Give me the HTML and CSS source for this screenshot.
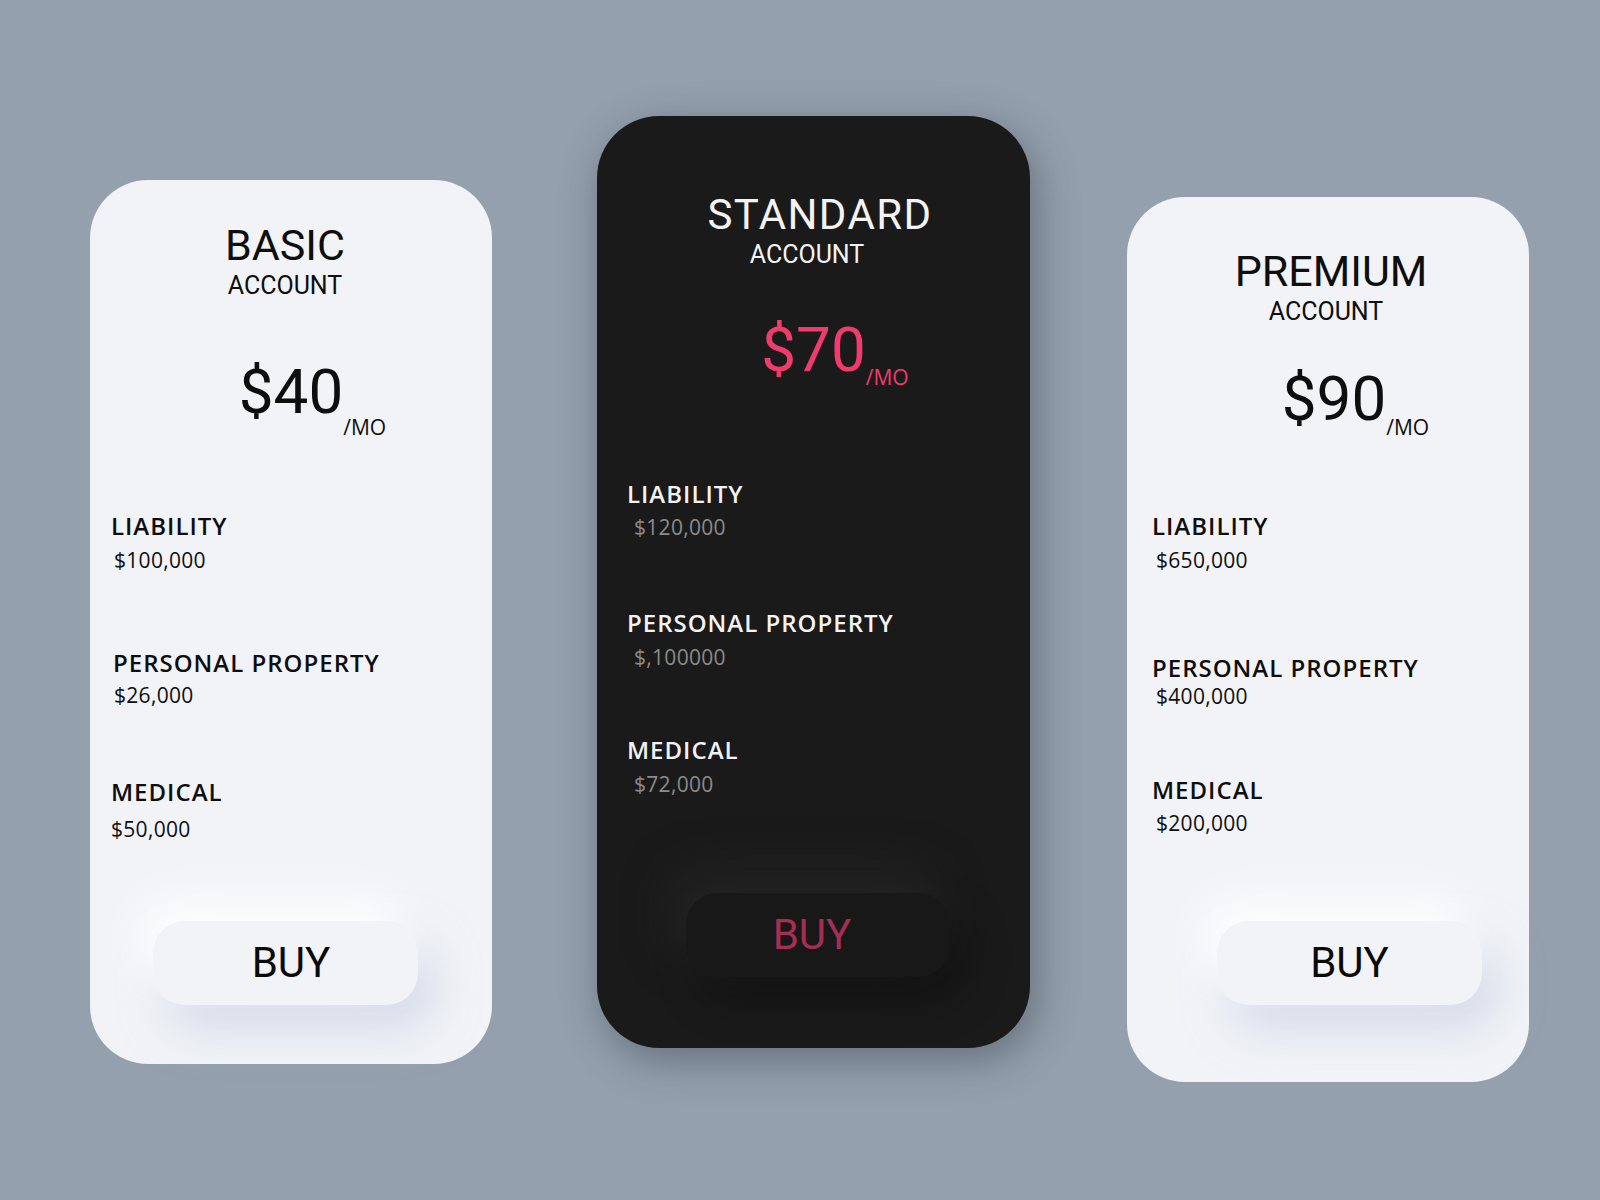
FILE: index.html
```html
<!DOCTYPE html>
<html lang="en">
<head>
<meta charset="utf-8">
<title>Plans</title>
<link rel="stylesheet" href="styles.css">
</head>
<body>
<main class="plans">
  <section class="plan plan--basic">
    <h2 class="plan-name">BASIC</h2>
    <p class="plan-sub">ACCOUNT</p>
    <div class="price">
      <span class="price-amount">$40</span>
      <span class="price-unit">/MO</span>
    </div>
    <ul class="features">
      <li class="feature"><span class="feature-label">LIABILITY</span><span class="feature-value">$100,000</span></li>
      <li class="feature"><span class="feature-label">PERSONAL PROPERTY</span><span class="feature-value">$26,000</span></li>
      <li class="feature"><span class="feature-label">MEDICAL</span><span class="feature-value">$50,000</span></li>
    </ul>
    <button class="buy" type="button">BUY</button>
  </section>

  <section class="plan plan--standard">
    <h2 class="plan-name">STANDARD</h2>
    <p class="plan-sub">ACCOUNT</p>
    <div class="price">
      <span class="price-amount">$70</span>
      <span class="price-unit">/MO</span>
    </div>
    <ul class="features">
      <li class="feature"><span class="feature-label">LIABILITY</span><span class="feature-value">$120,000</span></li>
      <li class="feature"><span class="feature-label">PERSONAL PROPERTY</span><span class="feature-value">$,100000</span></li>
      <li class="feature"><span class="feature-label">MEDICAL</span><span class="feature-value">$72,000</span></li>
    </ul>
    <button class="buy" type="button">BUY</button>
  </section>

  <section class="plan plan--premium">
    <h2 class="plan-name">PREMIUM</h2>
    <p class="plan-sub">ACCOUNT</p>
    <div class="price">
      <span class="price-amount">$90</span>
      <span class="price-unit">/MO</span>
    </div>
    <ul class="features">
      <li class="feature"><span class="feature-label">LIABILITY</span><span class="feature-value">$650,000</span></li>
      <li class="feature"><span class="feature-label">PERSONAL PROPERTY</span><span class="feature-value">$400,000</span></li>
      <li class="feature"><span class="feature-label">MEDICAL</span><span class="feature-value">$200,000</span></li>
    </ul>
    <button class="buy" type="button">BUY</button>
  </section>
</main>
</body>
</html>
```
FILE: styles.css
```css
* {
  box-sizing: border-box;
  margin: 0;
  padding: 0;
}

html, body {
  height: 1200px;
  overflow: hidden;
}

body {
  background: #94a0ad;
  font-family: "Open Sans", "Noto Sans", sans-serif;
}

/* row of pricing cards */
.plans {
  display: flex;
  align-items: flex-start;
  padding-left: 90px;
}

.plan {
  display: flex;
  flex-direction: column;
  background: #f1f3f7;
  color: #0e0e0e;
  border-radius: 58px;
}

.plan--basic {
  width: 402px;
  height: 884px;
  margin-top: 180px;
  padding-top: 44px;
  padding-bottom: 59px;
}

.plan--standard {
  width: 433px;
  height: 932px;
  margin-top: 116px;
  margin-left: 105px;
  padding-top: 78px;
  padding-bottom: 71px;
  background: #1a1a1a;
  color: #f3f3f3;
  border-radius: 62px;
  box-shadow: 6px 12px 42px rgba(38, 46, 60, 0.42);
}

.plan--premium {
  width: 402px;
  height: 885px;
  margin-top: 197px;
  margin-left: 97px;
  padding-top: 53px;
  padding-bottom: 77px;
}

/* heading */
.plan-name {
  font-family: Roboto, "Open Sans", sans-serif;
  font-size: 43px;
  line-height: 43px;
  font-weight: 400;
  text-align: center;
}

.plan-sub {
  margin-top: 6px;
  font-family: Roboto, "Open Sans", sans-serif;
  font-size: 25px;
  line-height: 25px;
  text-align: center;
}

.plan--basic .plan-name,
.plan--basic .plan-sub {
  padding-right: 12px;
}

.plan--standard .plan-name {
  font-size: 42px;
  line-height: 42px;
  letter-spacing: 1.4px;
  padding-left: 13px;
}

.plan--standard .plan-sub {
  padding-right: 13px;
}

.plan--premium .plan-name {
  padding-left: 6px;
}

.plan--premium .plan-sub {
  padding-right: 4px;
}

/* price: amount centred, unit hanging to its right */
.price {
  display: grid;
  grid-template-columns: 1fr auto 1fr;
  align-items: end;
}

.price-amount {
  grid-column: 2;
  font-family: Roboto, "Open Sans", sans-serif;
  font-size: 62px;
  line-height: 62px;
}

.price-unit {
  grid-column: 3;
  justify-self: start;
  font-size: 21px;
  line-height: 21px;
}

.plan--basic .price { margin-top: 63px; }
.plan--basic .price-unit { margin-bottom: -15px; }

.plan--standard .price { margin-top: 52px; color: #f23b6d; }
.plan--standard .price-unit { margin-bottom: -7px; }

.plan--premium .price { margin-top: 44px; padding-left: 12px; }
.plan--premium .price-unit { margin-bottom: -8px; }

/* coverage list */
.features {
  list-style: none;
}

.feature {
  display: flex;
  flex-direction: column;
  align-items: flex-start;
}

.feature-label {
  font-size: 24px;
  line-height: 24px;
  font-weight: 600;
  letter-spacing: 1px;
}

.feature-value {
  font-size: 21px;
  line-height: 21px;
  letter-spacing: 0.3px;
}

.plan--basic .features { margin-top: 91px; padding-left: 21px; }
.plan--basic .feature-value { margin-top: 12px; padding-left: 3px; }
.plan--basic .feature:nth-child(2) { margin-top: 80px; padding-left: 2px; }
.plan--basic .feature:nth-child(2) .feature-value { margin-top: 10px; padding-left: 1px; }
.plan--basic .feature:nth-child(3) { margin-top: 74px; }
.plan--basic .feature:nth-child(3) .feature-value { margin-top: 15px; padding-left: 0; }

.plan--standard .features { margin-top: 101px; padding-left: 30px; }
.plan--standard .feature-value { margin-top: 11px; padding-left: 7px; color: #8b8b8b; }
.plan--standard .feature:nth-child(2) { margin-top: 73px; }
.plan--standard .feature:nth-child(2) .feature-value { margin-top: 12px; }
.plan--standard .feature:nth-child(3) { margin-top: 70px; }
.plan--standard .feature:nth-child(3) .feature-value { margin-top: 12px; }

.plan--premium .features { margin-top: 84px; padding-left: 25px; }
.plan--premium .feature-value { margin-top: 12px; padding-left: 4px; }
.plan--premium .feature:nth-child(2) { margin-top: 85px; }
.plan--premium .feature:nth-child(2) .feature-value { margin-top: 6px; }
.plan--premium .feature:nth-child(3) { margin-top: 71px; }
.plan--premium .feature:nth-child(3) .feature-value { margin-top: 11px; }

/* soft extruded buy button */
.buy {
  align-self: flex-start;
  margin-top: auto;
  width: 265px;
  height: 84px;
  border: none;
  border-radius: 32px;
  background: #f1f3f7;
  color: #0a0a0a;
  font-family: Roboto, "Open Sans", sans-serif;
  font-size: 42px;
  line-height: 84px;
  box-shadow: -14px -22px 46px rgba(255, 255, 255, 0.95),
              14px 22px 46px rgba(192, 200, 224, 0.6);
}

.plan--basic .buy {
  margin-left: 63px;
  padding-left: 11px;
}

.plan--standard .buy {
  margin-left: 89px;
  width: 264px;
  padding-right: 12px;
  background: #181818;
  color: #a72d55;
  box-shadow: -14px -22px 46px rgba(44, 44, 44, 0.55),
              14px 22px 46px rgba(0, 0, 0, 0.28);
}

.plan--premium .buy {
  margin-left: 90px;
}
```
